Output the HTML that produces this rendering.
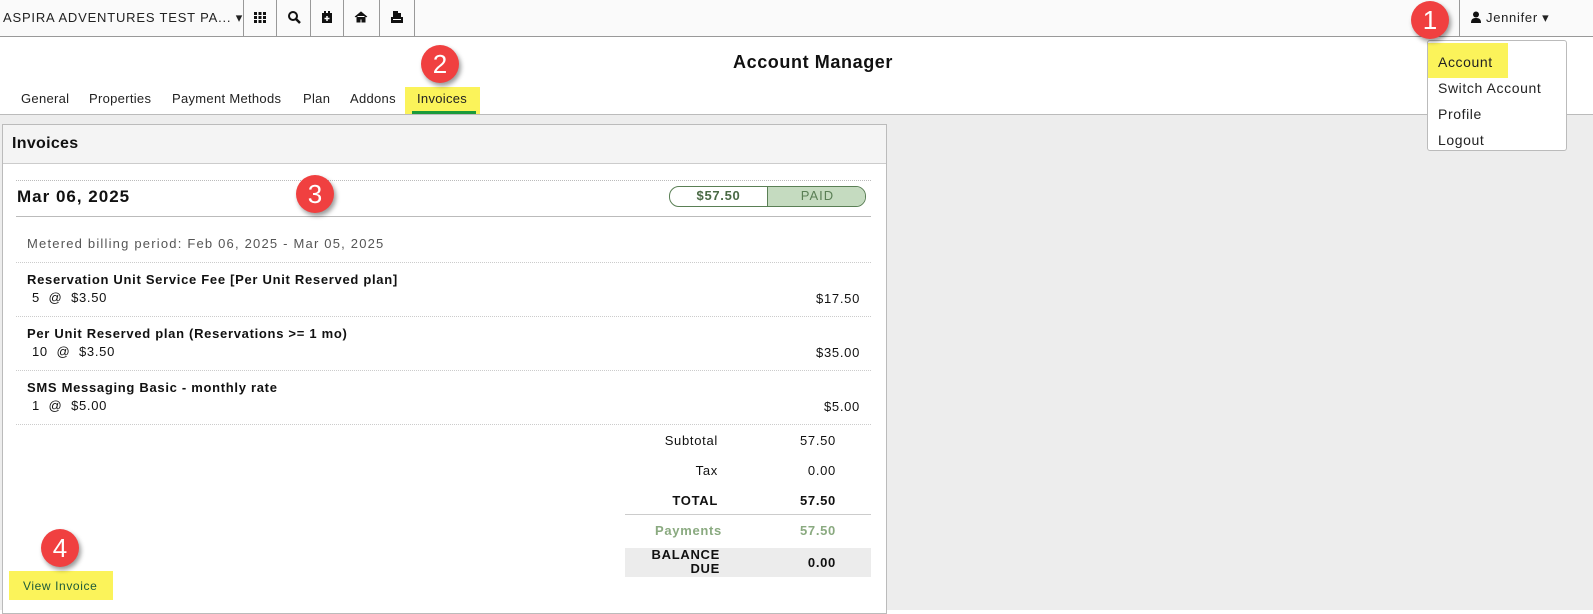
<!DOCTYPE html>
<html><head><style>
*{box-sizing:border-box;margin:0;padding:0}
body{width:1593px;height:610px;overflow:hidden;background:#fff;font-family:"Liberation Sans",sans-serif;color:#111;position:relative;font-size:13px;letter-spacing:.7px}
.abs{position:absolute}
.top{left:0;top:0;width:1593px;height:37px;background:#fafafa;border-bottom:1px solid #999}
.sep{top:0;width:1px;height:36px;background:#999}
.ic{top:10px;width:14px;height:14px}
.badge{width:38px;height:38px;border-radius:50%;background:#f04040;color:#fff;font-size:26px;text-align:center;line-height:38px;box-shadow:2px 3px 5px rgba(0,0,0,.4);letter-spacing:0}
.tab{top:91px;font-size:13px;color:#222;letter-spacing:.3px}
.hl{background:#fbf35a}
.r{text-align:right}
</style></head><body>
<div class="abs top"></div>
<div class="abs" style="left:3px;top:10px;font-size:13px;letter-spacing:.8px;color:#222">ASPIRA ADVENTURES TEST PA... ▾</div>
<div class="abs sep" style="left:243px"></div>
<div class="abs sep" style="left:276px"></div>
<div class="abs sep" style="left:310px"></div>
<div class="abs sep" style="left:343px"></div>
<div class="abs sep" style="left:379px"></div>
<div class="abs sep" style="left:414px"></div>
<div class="abs sep" style="left:1459px"></div>
<svg class="abs ic" style="left:253px" viewBox="0 0 14 14"><g fill="#111"><rect x="1" y="2" width="3" height="3"/><rect x="5.5" y="2" width="3" height="3"/><rect x="10" y="2" width="3" height="3"/><rect x="1" y="6" width="3" height="3"/><rect x="5.5" y="6" width="3" height="3"/><rect x="10" y="6" width="3" height="3"/><rect x="1" y="10" width="3" height="3"/><rect x="5.5" y="10" width="3" height="3"/><rect x="10" y="10" width="3" height="3"/></g></svg>
<svg class="abs ic" style="left:287px" viewBox="0 0 14 14"><circle cx="6" cy="6" r="4" stroke="#111" stroke-width="2" fill="none"/><path d="M9 9l4 4" stroke="#111" stroke-width="2.5"/></svg>
<svg class="abs ic" style="left:320px" viewBox="0 0 14 14"><rect x="2" y="3" width="10" height="10" fill="#111"/><rect x="4" y="1" width="2" height="3" fill="#111"/><rect x="8" y="1" width="2" height="3" fill="#111"/><path d="M7 6v5M4.5 8.5h5" stroke="#fff" stroke-width="1.5"/></svg>
<svg class="abs ic" style="left:354px" viewBox="0 0 14 14"><path d="M1 7L7 2l6 5M3 6v6h3V9h2v3h3V6" fill="#111" stroke="#111" stroke-width="1"/></svg>
<svg class="abs ic" style="left:390px" viewBox="0 0 14 14"><rect x="1" y="7" width="12" height="6" fill="#111"/><rect x="3" y="3" width="8" height="4" fill="#111"/><rect x="3" y="1" width="5" height="2" fill="#111"/><rect x="3" y="9" width="8" height="1" fill="#fff"/></svg>
<svg class="abs" style="left:1470px;top:11px" width="12" height="12" viewBox="0 0 12 12"><circle cx="6" cy="3.5" r="3" fill="#111"/><path d="M1 12c0-4 2-5 5-5s5 1 5 5z" fill="#111"/></svg>
<div class="abs" style="left:1486px;top:10px;font-size:13px;color:#222">Jennifer ▾</div>

<div class="abs" style="left:0;top:52px;width:1626px;text-align:center;font-size:18px;font-weight:bold;letter-spacing:.6px">Account Manager</div>
<div class="abs tab" style="left:21px">General</div>
<div class="abs tab" style="left:89px">Properties</div>
<div class="abs tab" style="left:172px">Payment Methods</div>
<div class="abs tab" style="left:303px">Plan</div>
<div class="abs tab" style="left:350px">Addons</div>
<div class="abs hl" style="left:405px;top:87px;width:75px;height:30px"></div>
<div class="abs tab" style="left:417px">Invoices</div>
<div class="abs" style="left:412px;top:111px;width:64px;height:3px;background:#1a9a3a"></div>
<div class="abs" style="left:0;top:114px;width:1593px;height:1px;background:#bbb"></div>
<div class="abs" style="left:0;top:115px;width:1593px;height:495px;background:#ededed"></div>

<div class="abs" style="left:2px;top:124px;width:885px;height:490px;background:#fff;border:1px solid #bbb"></div>
<div class="abs" style="left:3px;top:125px;width:883px;height:39px;background:#f4f4f4;border-bottom:1px solid #ccc"></div>
<div class="abs" style="left:12px;top:135px;font-size:16px;font-weight:bold;letter-spacing:.3px">Invoices</div>
<div class="abs" style="left:16px;top:180px;width:855px;border-top:1px dotted #bbb"></div>
<div class="abs" style="left:17px;top:187px;font-size:17px;font-weight:bold;letter-spacing:1px">Mar 06, 2025</div>
<div class="abs" style="left:669px;top:186px;width:197px;height:21px;border:1.5px solid #5a7f55;border-radius:10px;overflow:hidden;font-size:13px;line-height:18px">
<div class="abs" style="left:0;top:0;width:97px;height:20px;text-align:center;font-weight:bold;color:#4a6a45">$57.50</div>
<div class="abs" style="left:97px;top:0;width:100px;height:20px;background:#c5dbc0;border-left:1.5px solid #5a7f55;text-align:center;color:#5a7f55;letter-spacing:1px">PAID</div></div>
<div class="abs" style="left:16px;top:216px;width:855px;height:1px;background:#bbb"></div>
<div class="abs" style="left:27px;top:236px;color:#555;letter-spacing:1.2px">Metered billing period: Feb 06, 2025 - Mar 05, 2025</div>
<div class="abs" style="left:16px;top:262px;width:855px;border-top:1px dotted #ccc"></div>
<div class="abs" style="left:27px;top:272px;font-weight:bold">Reservation Unit Service Fee [Per Unit Reserved plan]</div>
<div class="abs" style="left:32px;top:290px">5 &nbsp;@ &nbsp;$3.50</div>
<div class="abs r" style="left:780px;top:291px;width:80px">$17.50</div>
<div class="abs" style="left:16px;top:316px;width:855px;border-top:1px dotted #ccc"></div>
<div class="abs" style="left:27px;top:326px;font-weight:bold">Per Unit Reserved plan (Reservations &gt;= 1 mo)</div>
<div class="abs" style="left:32px;top:344px">10 &nbsp;@ &nbsp;$3.50</div>
<div class="abs r" style="left:780px;top:345px;width:80px">$35.00</div>
<div class="abs" style="left:16px;top:370px;width:855px;border-top:1px dotted #ccc"></div>
<div class="abs" style="left:27px;top:380px;font-weight:bold">SMS Messaging Basic - monthly rate</div>
<div class="abs" style="left:32px;top:398px">1 &nbsp;@ &nbsp;$5.00</div>
<div class="abs r" style="left:780px;top:399px;width:80px">$5.00</div>
<div class="abs" style="left:16px;top:424px;width:855px;border-top:1px dotted #ccc"></div>
<div class="abs r" style="left:620px;top:433px;width:98px">Subtotal</div>
<div class="abs r" style="left:740px;top:433px;width:96px">57.50</div>
<div class="abs r" style="left:620px;top:463px;width:98px">Tax</div>
<div class="abs r" style="left:740px;top:463px;width:96px">0.00</div>
<div class="abs r" style="left:620px;top:493px;width:98px;font-weight:bold">TOTAL</div>
<div class="abs r" style="left:740px;top:493px;width:96px;font-weight:bold">57.50</div>
<div class="abs" style="left:625px;top:514px;width:246px;height:1px;background:#ccc"></div>
<div class="abs r" style="left:620px;top:523px;width:102px;font-weight:bold;color:#8aaa80">Payments</div>
<div class="abs r" style="left:740px;top:523px;width:96px;font-weight:bold;color:#8aaa80">57.50</div>
<div class="abs" style="left:625px;top:548px;width:246px;height:29px;background:#ececec"></div>
<div class="abs r" style="left:620px;top:548px;width:100px;font-weight:bold;line-height:14px">BALANCE<br>DUE</div>
<div class="abs r" style="left:740px;top:555px;width:96px;font-weight:bold">0.00</div>
<div class="abs hl" style="left:9px;top:571px;width:104px;height:29px"></div>
<div class="abs" style="left:23px;top:579px;font-size:12px;color:#1d5a3a;letter-spacing:.6px">View Invoice</div>

<div class="abs" style="left:1427px;top:40px;width:140px;height:111px;background:#fff;border:1px solid #bbb;border-radius:3px"></div>
<div class="abs hl" style="left:1428px;top:43px;width:80px;height:35px"></div>
<div class="abs" style="left:1438px;top:49px;font-size:14px;color:#222;letter-spacing:.6px;line-height:26px">Account<br>Switch Account<br>Profile<br>Logout</div>

<div class="abs badge" style="left:1411px;top:1px">1</div>
<div class="abs badge" style="left:421px;top:45px">2</div>
<div class="abs badge" style="left:296px;top:175px">3</div>
<div class="abs badge" style="left:41px;top:529px">4</div>
</body></html>
